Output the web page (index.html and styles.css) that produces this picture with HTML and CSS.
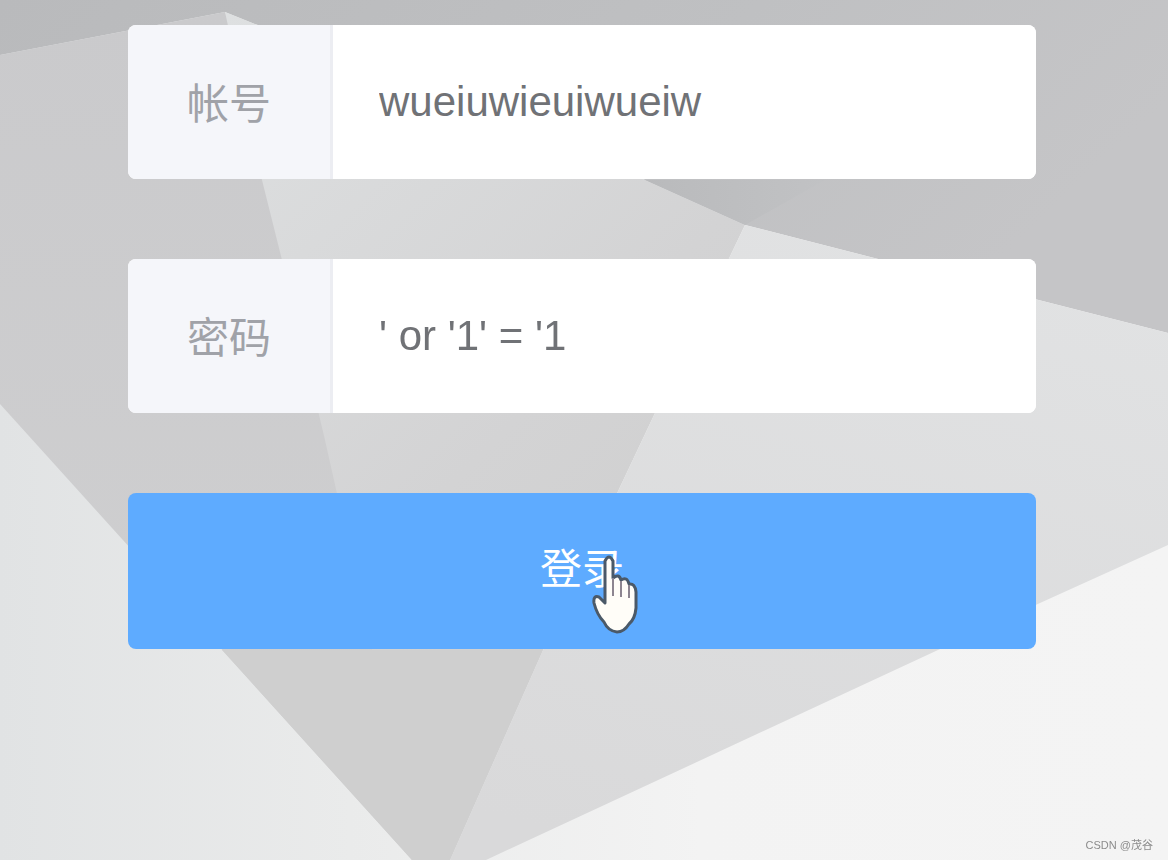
FILE: index.html
```html
<!DOCTYPE html>
<html lang="zh-CN">
<head>
  <meta charset="UTF-8">
  <meta name="viewport" content="width=device-width, initial-scale=1.0">
  <title>登录</title>
  <link rel="stylesheet" href="styles.css">
</head>
<body>
  <!-- polygon background -->
  <svg class="bg" viewBox="0 0 1168 860" preserveAspectRatio="none" aria-hidden="true">
    <defs>
      <linearGradient id="base" x1="0" y1="0" x2="1" y2="0">
        <stop offset="0" stop-color="#e1e3e4"/>
        <stop offset="0.3" stop-color="#eaebeb"/>
        <stop offset="0.6" stop-color="#f3f3f3"/>
        <stop offset="1" stop-color="#f4f4f4"/>
      </linearGradient>
      <linearGradient id="top" x1="0" y1="0" x2="1" y2="0.3">
        <stop offset="0" stop-color="#b9babc"/>
        <stop offset="0.6" stop-color="#bfc0c2"/>
        <stop offset="1" stop-color="#c5c5c7"/>
      </linearGradient>
      <linearGradient id="left" x1="0" y1="0" x2="0" y2="1">
        <stop offset="0" stop-color="#cacacc"/>
        <stop offset="1" stop-color="#d0d0d1"/>
      </linearGradient>
      <linearGradient id="middle" x1="0" y1="0" x2="0.6" y2="1">
        <stop offset="0" stop-color="#dee0e1"/>
        <stop offset="0.6" stop-color="#d3d3d4"/>
        <stop offset="1" stop-color="#cecece"/>
      </linearGradient>
      <linearGradient id="right" x1="0.6" y1="0" x2="0.3" y2="1">
        <stop offset="0" stop-color="#e1e2e3"/>
        <stop offset="1" stop-color="#d9d9da"/>
      </linearGradient>
      <linearGradient id="shade" x1="0" y1="0" x2="1" y2="0">
        <stop offset="0" stop-color="#b9babc"/>
        <stop offset="1" stop-color="#c1c2c4"/>
      </linearGradient>
    </defs>
    <rect width="1168" height="860" fill="url(#base)"/>
    <polygon points="0,0 1168,0 1168,333 745,225 645,180 225,12 0,55" fill="url(#top)"/>
    <polygon points="0,55 225,12 400,400 450,860 412,860 0,404" fill="url(#left)"/>
    <polygon points="225,12 645,180 745,225 655,413 543,650 450,860 412,860 372,650 325,440 282,260 262,180" fill="url(#middle)"/>
    <polygon points="222,650 543,650 450,860 412,860" fill="#cfcfcf"/>
    <polygon points="745,225 1168,333 1168,545 1040,603 938,650 486,860 450,860 543,650 655,413" fill="url(#right)"/>
    <polygon points="645,180 825,180 745,225" fill="url(#shade)"/>
  </svg>

  <form class="login-form" onsubmit="return false">
    <div class="input-group">
      <label for="account">帐号</label>
      <input type="text" id="account" value="wueiuwieuiwueiw" autocomplete="off" spellcheck="false">
    </div>
    <div class="input-group">
      <label for="password">密码</label>
      <input type="text" id="password" value="' or '1' = '1" autocomplete="off" spellcheck="false">
    </div>
    <button type="submit" class="login-btn">
      <span class="btn-text">登录
        <svg class="pointer" viewBox="0 0 46 80" aria-hidden="true">
          <path d="M13 7 Q17 -1 21 7 L21 24 Q27 19 29 26 Q35 22 37 30 Q43 29 44 38 L44 54 Q43 65 37 70 Q32 78 25 78 Q16 77 12 68 Q5 61 2 49 Q1 41 7 43 L13 49 Z" fill="#fffdf8" stroke="#4b5968" stroke-width="3" stroke-linejoin="round"/>
          <path d="M21 24 V42 M29 27 V43 M37 31 V44" fill="none" stroke="#8d8590" stroke-width="2"/>
        </svg>
      </span>
    </button>
  </form>

  <div class="watermark">CSDN @茂谷</div>
</body>
</html>
```

FILE: styles.css
```css
* {
  margin: 0;
  padding: 0;
  box-sizing: border-box;
}

body {
  min-height: 100vh;
  background: #e6e7e8;
  font-family: "Liberation Sans", "Noto Sans CJK SC", sans-serif;
}

.bg {
  position: fixed;
  top: 0;
  left: 0;
  width: 100%;
  height: 100%;
  z-index: -1;
}

.login-form {
  display: flex;
  flex-direction: column;
  gap: 80px;
  padding: 25px 132px 25px 128px;
}

.input-group {
  display: flex;
  height: 154px;
  border-radius: 8px;
  overflow: hidden;
  background: #fff;
}

.input-group label {
  display: flex;
  align-items: center;
  justify-content: center;
  width: 205px;
  padding-bottom: 4px;
  background: #f5f6fa;
  border-right: 3px solid #ecedf2;
  color: #a0a2a8;
  font-size: 42px;
}

.input-group input {
  flex: 1;
  min-width: 0;
  padding: 0 46px;
  border: none;
  outline: none;
  background: #fff;
  color: #707276;
  font-family: inherit;
  font-size: 42px;
}

.login-btn {
  height: 156px;
  padding-bottom: 12px;
  border: none;
  border-radius: 8px;
  background: #5eabff;
  color: #fff;
  font-family: inherit;
  font-size: 42px;
  cursor: pointer;
}

.btn-text {
  position: relative;
}

/* hand pointer over the button text */
.pointer {
  position: absolute;
  top: 8px;
  left: 52px;
  width: 46px;
  height: 80px;
}

.watermark {
  position: fixed;
  right: 15px;
  bottom: 6px;
  color: #8c8c8c;
  font-size: 11px;
  line-height: 18px;
}
```
